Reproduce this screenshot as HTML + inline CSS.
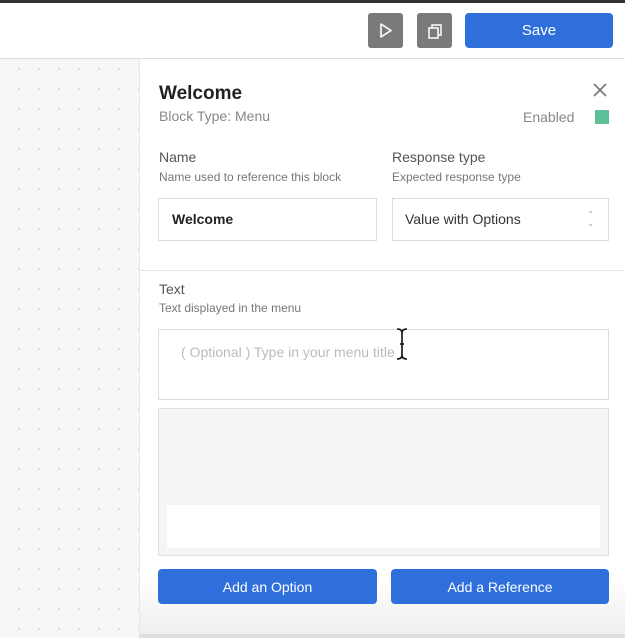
<!DOCTYPE html>
<html><head><style>
*{margin:0;padding:0;box-sizing:border-box}
body{width:625px;height:638px;overflow:hidden;font-family:"Liberation Sans",sans-serif;background:#fff;position:relative}
.a{position:absolute}
.canvas{left:0;top:59px;width:139px;height:579px;background-color:#f7f7f7;background-image:radial-gradient(circle,#dcdcdc 1px,transparent 1.3px);background-size:20px 20px;background-position:9px 0}
.btn{background:#2f6fdc;color:#fff;border-radius:4px;font-size:14px;display:flex;align-items:center;justify-content:center}
.gray{background:#7a7a7a;border-radius:3px}
.box{border:1px solid #dcdcdc;background:#fff}
.lbl{font-size:14px;color:#555}
.sub{font-size:12px;color:#777}
</style></head><body>
<div class="a" style="left:0;top:0;width:625px;height:3px;background:#333"></div>
<div class="a" style="left:0;top:58px;width:625px;height:1px;background:#ddd"></div>
<div class="a gray" style="left:368px;top:13px;width:35px;height:35px"><svg width="35" height="35"><path d="M13 11 L23 17.5 L13 24 Z" fill="none" stroke="#fff" stroke-width="1.6" stroke-linejoin="round"/></svg></div>
<div class="a gray" style="left:417px;top:13px;width:35px;height:35px"><svg width="35" height="35"><rect x="12" y="15" width="9" height="10" fill="none" stroke="#fff" stroke-width="1.5"/><path d="M15 15 V12 H24 V22 H21" fill="none" stroke="#fff" stroke-width="1.5"/></svg></div>
<div class="a btn" style="left:465px;top:13px;width:148px;height:35px;font-size:15px">Save</div>
<div class="a canvas"></div>
<div class="a" style="left:139px;top:59px;width:1px;height:579px;background:#e6e6e6"></div>
<div class="a" style="left:140px;top:59px;width:485px;height:579px;background:linear-gradient(#fff 520px,#eeeeee 575px)"></div>
<div class="a" style="left:140px;top:634px;width:485px;height:4px;background:#e0e0e0"></div>
<div class="a" style="left:159px;top:83px;font-size:19px;font-weight:bold;color:#222">Welcome</div>
<div class="a" style="left:159px;top:108px;font-size:14px;color:#888">Block Type: Menu</div>
<svg class="a" style="left:593px;top:83px" width="14" height="14"><path d="M1 1L13 13M13 1L1 13" stroke="#777" stroke-width="1.6"/></svg>
<div class="a" style="left:523px;top:109px;font-size:14px;color:#888">Enabled</div>
<div class="a" style="left:595px;top:110px;width:14px;height:14px;background:#5cc197"></div>
<div class="a lbl" style="left:159px;top:149px">Name</div>
<div class="a sub" style="left:159px;top:170px">Name used to reference this block</div>
<div class="a lbl" style="left:392px;top:149px">Response type</div>
<div class="a sub" style="left:392px;top:170px">Expected response type</div>
<div class="a box" style="left:158px;top:198px;width:219px;height:43px;padding:12px 13px;font-size:14px;font-weight:bold;color:#222">Welcome</div>
<div class="a box" style="left:392px;top:198px;width:217px;height:43px;padding:12px 12px;font-size:14px;color:#333">Value with Options<span style="position:absolute;right:14px;top:11px;font-size:8px;color:#999;line-height:9px">&#8963;<br>&#8964;</span></div>
<div class="a" style="left:140px;top:270px;width:485px;height:1px;background:#e6e6e6"></div>
<div class="a lbl" style="left:159px;top:281px">Text</div>
<div class="a sub" style="left:159px;top:301px">Text displayed in the menu</div>
<div class="a box" style="left:158px;top:329px;width:451px;height:71px;padding:14px 22px;font-size:14px;color:#bbb">( Optional ) Type in your menu title</div>
<svg class="a" style="left:394px;top:328px" width="16" height="32"><path d="M3 1 Q8 1 8 5 V27 Q8 31 3 31 M13 1 Q8 1 8 5 M8 27 Q8 31 13 31 M6 16 H10" fill="none" stroke="#111" stroke-width="1.6"/></svg>
<div class="a box" style="left:158px;top:408px;width:451px;height:148px;background:#f5f5f5;border-color:#e0e0e0"></div>
<div class="a" style="left:167px;top:505px;width:433px;height:43px;background:#fff"></div>
<div class="a btn" style="left:158px;top:569px;width:219px;height:35px">Add an Option</div>
<div class="a btn" style="left:391px;top:569px;width:218px;height:35px">Add a Reference</div>
</body></html>
